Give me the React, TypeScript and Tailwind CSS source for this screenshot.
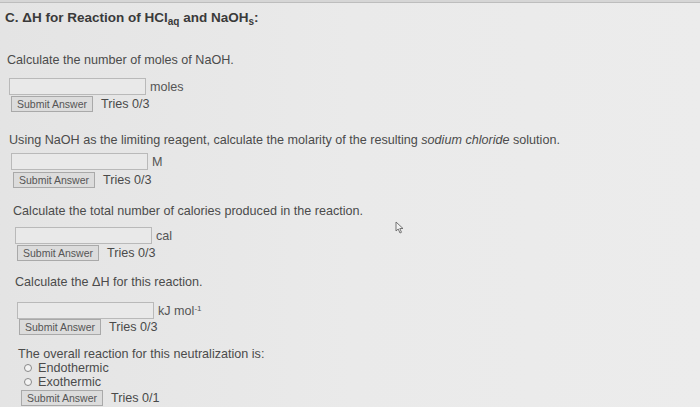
import React from 'react';

interface QuestionProps {
    prompt: React.ReactNode;
    unit: React.ReactNode;
    tries: string;
    className?: string;
    inputGap: string;
    buttonGap: string;
}

const SubmitRow: React.FC<{ tries: string }> = ({ tries }) => (
    <div className="flex items-center gap-2 leading-[16px]">
        <div className="h-[16px] w-[82px] border border-[#a9a9a9] bg-[#dcdcdc] text-[10.5px] leading-[14px] text-[#555] text-center">
            Submit Answer
        </div>
        <span className="text-[12.6px] text-[#4a4a4a]">{tries}</span>
    </div>
);

const Question: React.FC<QuestionProps> = ({ prompt, unit, tries, className, inputGap, buttonGap }) => (
    <div className={className}>
        <div className="text-[12.6px] leading-[16px] text-[#4b4b4b]">{prompt}</div>
        <div className={`${inputGap} flex items-center gap-[4px] pl-[2px]`}>
            <div className="h-[17px] w-[137px] border border-[#b9b9b9] bg-[#e9e9e9]" />
            <span className="text-[12.6px] leading-[16px] text-[#555]">{unit}</span>
        </div>
        <div className={`${buttonGap} pl-[4px]`}>
            <SubmitRow tries={tries} />
        </div>
    </div>
);

export default function App() {
    return (
        <div
            className="w-[700px] h-[407px] overflow-hidden bg-gradient-to-r from-[#e4e4e4] via-[#eaeaea] to-[#ececec]"
            style={{ fontFamily: '"Liberation Sans", Arial, sans-serif' }}
        >
            <div className="h-[3px] border-b border-[#bdbdbd] bg-[#d6d6d6]" />
            <div className="pl-[5px] pt-[7px] text-[13.5px] leading-[16px] font-bold text-[#3a3a3a]">
                C. ΔH for Reaction of HCl<sub className="text-[10px]">aq</sub> and NaOH<sub className="text-[10px]">s</sub>:
            </div>

            <Question
                className="mt-[26px] pl-[7px]"
                prompt="Calculate the number of moles of NaOH."
                unit="moles"
                tries="Tries 0/3"
                inputGap="mt-[10px]"
                buttonGap="mt-[1px]"
            />

            <Question
                className="mt-[20px] pl-[9px]"
                prompt={<>Using NaOH as the limiting reagent, calculate the molarity of the resulting <i>sodium chloride</i> solution.</>}
                unit="M"
                tries="Tries 0/3"
                inputGap="mt-[5px]"
                buttonGap="mt-[2px]"
            />

            <div className="relative mt-[15px]">
                <Question
                    className="pl-[13px]"
                    prompt="Calculate the total number of calories produced in the reaction."
                    unit="cal"
                    tries="Tries 0/3"
                    inputGap="mt-[8px]"
                    buttonGap="mt-[1px]"
                />
                <svg className="absolute left-[395px] top-[18px]" width="9" height="13" viewBox="0 0 9 13">
                    <path d="M1 1 L1 10 L3.2 8 L5 12 L6.5 11.3 L4.8 7.5 L8 7.5 Z" fill="#f2f2f2" stroke="#666" strokeWidth="0.9" />
                </svg>
            </div>

            <Question
                className="mt-[13px] pl-[15px]"
                prompt="Calculate the ΔH for this reaction."
                unit={<>kJ mol<sup className="text-[8px]">-1</sup></>}
                tries="Tries 0/3"
                inputGap="mt-[12px]"
                buttonGap="mt-0"
            />

            <div className="mt-[12px] pl-[18px]">
                <div className="text-[12.6px] leading-[14px] text-[#4b4b4b]">The overall reaction for this neutralization is:</div>
                {['Endothermic', 'Exothermic'].map((label) => (
                    <div key={label} className="flex items-center gap-[6px] pl-[6px] text-[12.6px] leading-[14px] text-[#4b4b4b]">
                        <span className="h-[8px] w-[8px] rounded-full border border-[#888] bg-[#f4f4f4]" />
                        {label}
                    </div>
                ))}
                <div className="mt-[1px] pl-[3px]">
                    <SubmitRow tries="Tries 0/1" />
                </div>
            </div>
        </div>
    );
}
